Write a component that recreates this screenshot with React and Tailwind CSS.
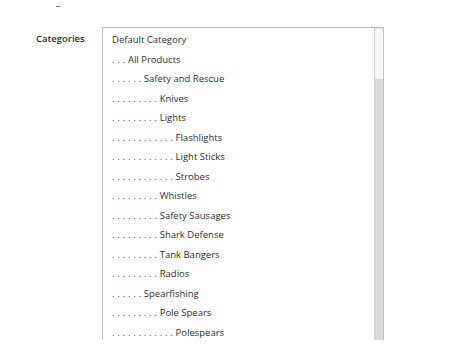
import React from 'react';

const ITEMS = [
  [0, 'Default Category'],
  [3, 'All Products'],
  [6, 'Safety and Rescue'],
  [9, 'Knives'],
  [9, 'Lights'],
  [12, 'Flashlights'],
  [12, 'Light Sticks'],
  [12, 'Strobes'],
  [9, 'Whistles'],
  [9, 'Safety Sausages'],
  [9, 'Shark Defense'],
  [9, 'Tank Bangers'],
  [9, 'Radios'],
  [6, 'Spearfishing'],
  [9, 'Pole Spears'],
  [12, 'Polespears'],
];

export default function App() {
  return (
    <div className="w-[474px] h-[356px] bg-white overflow-hidden text-[#303030]" style={{ fontFamily: '"Open Sans", "Liberation Sans", sans-serif' }}>
      {/* tail of the previous field, cut off at the top */}
      <div className="ml-[56px] mt-[6px] w-[4px] h-[1px] bg-[#8a8a8a]" />
      <div className="flex mt-[20px]">
        <div className="w-[102px] pl-[36px] pt-[5px] text-[9.5px] font-semibold leading-[13px] text-[#303030]">Categories</div>
        <div className="relative w-[282px] h-[313px] border-t border-l border-r border-[#c2c2c2] overflow-hidden">
          <ul className="pt-[2px] pl-[9px] text-[9.5px] leading-[19.5px]">
            {ITEMS.map(([dots, name]) => (
              <li key={name + dots} className="whitespace-nowrap">
                {dots > 0 && (
                  <span className="tracking-[2.8px] text-[#505050]">{'.'.repeat(dots)}</span>
                )}
                {name}
              </li>
            ))}
          </ul>
          {/* scrollbar */}
          <div className="absolute top-0 right-0 bottom-0 w-[9px] bg-[#dadada] border-l border-[#d0d0d0]">
            <div className="mt-[1px] h-[50px] bg-[#f7f7f7] rounded-t-[2px]" />
          </div>
        </div>
      </div>
    </div>
  );
}
